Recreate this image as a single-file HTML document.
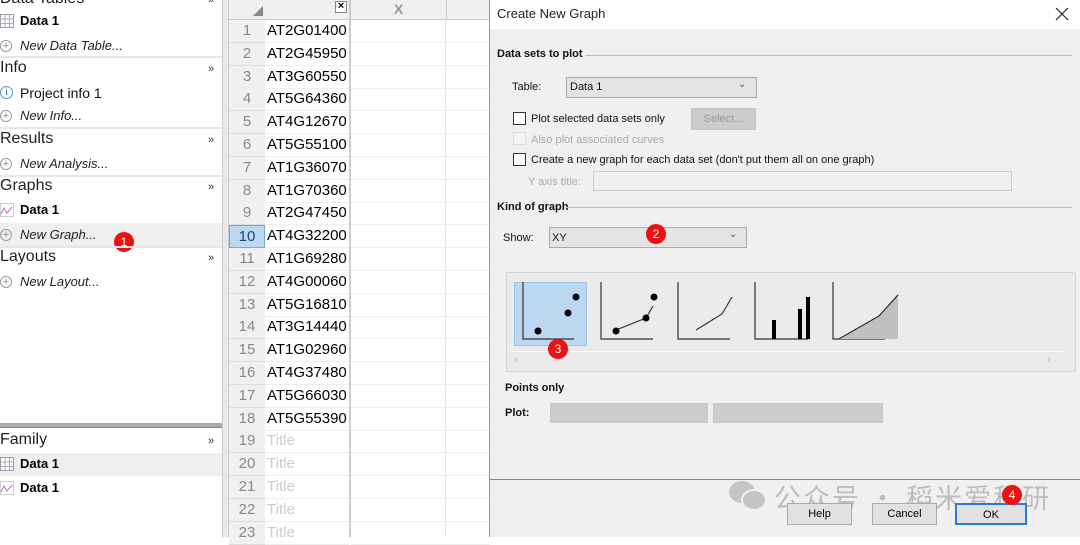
<!DOCTYPE html>
<html><head><meta charset="utf-8"><style>
*{margin:0;padding:0;box-sizing:border-box}
body{width:1080px;height:537px;overflow:hidden;background:#fff;font-family:"Liberation Sans","Noto Sans CJK SC",sans-serif;position:relative}
.a{position:absolute}
.sb{font-size:14px;color:#111}
.hd{font-size:16px;color:#222}
.it{font-style:italic;font-size:13px;color:#222}
.bd{font-weight:bold;font-size:13px}
.ln{height:2px;background:#e6e6e6;left:0;width:222px}
.chev{font-size:11px;color:#333;left:208px}
.plus{width:12px;height:12px;border:1px solid #999;border-radius:50%;font-size:11px;line-height:10px;text-align:center;color:#888;left:0}
.rn{left:229px;width:36px;text-align:center;font-size:15px;color:#888;height:23px;border-bottom:1px solid #ddd;background:#f0f0f0;line-height:22px}
.cell{left:265px;width:84px;font-size:15px;height:23px;line-height:22px;padding-left:2px;border-bottom:1px solid #eee}
.dlg{font-size:11px;color:#111}
.cb{width:13px;height:13px;border:1px solid #333;background:#fff}
.badge{width:20px;height:20px;border-radius:50%;background:#e11;color:#fff;font-size:12px;text-align:center;line-height:20px}
.btn{height:22px;border:1px solid #aaa;background:#e1e1e1;font-size:11px;text-align:center;line-height:20px}
</style></head><body>
<!-- sidebar -->
<div class="a hd" style="left:0;top:-10px">Data Tables</div>
<div class="a chev" style="top:-6px">»</div>
<svg class="a" style="left:0;top:14px" width="14" height="14"><rect x="0.5" y="0.5" width="13" height="13" fill="#fff" stroke="#99a"/><path d="M0 5h14M0 9.5h14M5 0v14M9.5 0v14" stroke="#aab"/></svg>
<div class="a bd" style="left:20px;top:13px">Data 1</div>
<div class="a plus" style="top:40px">+</div><div class="a it" style="left:20px;top:38px">New Data Table...</div>
<div class="a ln" style="top:56px"></div>
<div class="a hd" style="left:0;top:59px">Info</div><div class="a chev" style="top:63px">»</div>
<div class="a" style="left:0;top:86px;width:13px;height:13px;border:1px solid #59c;border-radius:50%;font-size:10px;color:#36a;text-align:center;line-height:11px">i</div>
<div class="a sb" style="left:20px;top:85px">Project info 1</div>
<div class="a plus" style="top:110px">+</div><div class="a it" style="left:20px;top:108px">New Info...</div>
<div class="a ln" style="top:127px"></div>
<div class="a hd" style="left:0;top:130px">Results</div><div class="a chev" style="top:134px">»</div>
<div class="a plus" style="top:158px">+</div><div class="a it" style="left:20px;top:156px">New Analysis...</div>
<div class="a ln" style="top:175px"></div>
<div class="a hd" style="left:0;top:177px">Graphs</div><div class="a chev" style="top:181px">»</div>
<svg class="a" style="left:0;top:203px" width="14" height="14"><rect x="0.5" y="0.5" width="13" height="13" fill="#fff" stroke="#ccc"/><path d="M1 11L4 5 7 10 12 4" stroke="#c6c" fill="none"/></svg>
<div class="a bd" style="left:20px;top:202px">Data 1</div>
<div class="a" style="left:0;top:223px;width:222px;height:23px;background:#efefef"></div>
<div class="a plus" style="top:229px">+</div><div class="a it" style="left:20px;top:227px">New Graph...</div>
<div class="a badge" style="left:114px;top:232px">1</div>
<div class="a ln" style="top:246px"></div>
<div class="a hd" style="left:0;top:248px">Layouts</div><div class="a chev" style="top:252px">»</div>
<div class="a plus" style="top:276px">+</div><div class="a it" style="left:20px;top:274px">New Layout...</div>
<div class="a" style="left:0;top:423px;width:222px;height:5px;background:#aaa;border-bottom:1px solid #888"></div>
<div class="a hd" style="left:0;top:431px">Family</div><div class="a chev" style="top:435px">»</div>
<div class="a" style="left:0;top:453px;width:222px;height:23px;background:#efefef"></div>
<svg class="a" style="left:0;top:457px" width="14" height="14"><rect x="0.5" y="0.5" width="13" height="13" fill="#fff" stroke="#99a"/><path d="M0 5h14M0 9.5h14M5 0v14M9.5 0v14" stroke="#aab"/></svg>
<div class="a bd" style="left:20px;top:456px">Data 1</div>
<svg class="a" style="left:0;top:481px" width="14" height="14"><rect x="0.5" y="0.5" width="13" height="13" fill="#fff" stroke="#ccc"/><path d="M1 11L4 5 7 10 12 4" stroke="#c6c" fill="none"/></svg>
<div class="a bd" style="left:20px;top:480px">Data 1</div>
<!-- divider -->
<div class="a" style="left:222px;top:0;width:7px;height:537px;background:#e8e8e8;border-left:1px solid #ccc;border-right:1px solid #ccc"></div>
<!-- grid -->
<div class="a" style="left:229px;top:0;width:36px;height:20px;background:#f0f0f0;border-bottom:1px solid #ccc"></div>
<div class="a" style="left:253px;top:6px;width:0;height:0;border-left:10px solid transparent;border-bottom:10px solid #888"></div>
<div class="a" style="left:265px;top:0;width:84px;height:20px;background:#f0f0f0;border-bottom:1px solid #ccc"></div>
<div class="a" style="left:335px;top:1px;width:12px;height:12px;border:1px solid #888;background:#fff;font-size:11px;font-weight:bold;line-height:9px;text-align:center">×</div>
<div class="a" style="left:349px;top:0;width:97px;height:20px;background:#f0f0f0;border-bottom:1px solid #ccc;border-left:2px solid #ccc;text-align:center;font-size:14px;color:#999;line-height:19px;font-weight:bold">X</div>
<div class="a" style="left:446px;top:0;width:44px;height:20px;background:#f0f0f0;border-bottom:1px solid #ccc;border-left:1px solid #ccc"></div>
<div class="a" style="left:349px;top:20px;width:2px;height:517px;background:#ccc"></div>
<div class="a" style="left:445px;top:20px;width:1px;height:517px;background:#e4e4e4"></div>
<div id="rows"></div>
<script>
var d=["AT2G01400","AT2G45950","AT3G60550","AT5G64360","AT4G12670","AT5G55100","AT1G36070","AT1G70360","AT2G47450","AT4G32200","AT1G69280","AT4G00060","AT5G16810","AT3G14440","AT1G02960","AT4G37480","AT5G66030","AT5G55390"];
var h="";for(var i=0;i<23;i++){var t=20+i*22.8;var sel=i==9;
h+='<div class="a rn" style="top:'+t+'px;'+(sel?'background:#bcd8f0;color:#247;border:1px solid #7ab;':'')+'">'+(i+1)+'</div>';
h+='<div class="a cell" style="top:'+t+'px;'+(i<18?'':'color:#ccc')+'">'+(i<18?d[i]:'Title')+'</div>';
h+='<div class="a" style="left:351px;width:139px;top:'+(t+22)+'px;height:1px;background:#eee"></div>';}
document.getElementById("rows").innerHTML=h;
</script>
<!-- dialog -->
<div class="a" style="left:489px;top:0;width:591px;height:537px;background:#f0f0f0;border-left:1px solid #999"></div>
<div class="a" style="left:490px;top:0;width:590px;height:29px;background:#fff"></div>
<div class="a" style="left:497px;top:6px;font-size:13px;color:#222">Create New Graph</div>
<svg class="a" style="left:1055px;top:7px" width="14" height="14"><path d="M1 1L13 13M13 1L1 13" stroke="#222" stroke-width="1.2"/></svg>
<div class="a dlg" style="left:497px;top:48px;font-weight:bold">Data sets to plot</div>
<div class="a" style="left:585px;top:55px;width:487px;height:1px;background:#bbb"></div>
<div class="a dlg" style="left:512px;top:81px">Table:</div>
<div class="a" style="left:566px;top:77px;width:191px;height:21px;border:1px solid #aaa;background:#e4e4e4"></div>
<div class="a dlg" style="left:570px;top:81px">Data 1</div>
<div class="a" style="left:738px;top:79px;font-size:10px;color:#555">&#8964;</div>
<div class="a cb" style="left:513px;top:112px"></div><div class="a dlg" style="left:531px;top:113px">Plot selected data sets only</div>
<div class="a" style="left:691px;top:108px;width:65px;height:22px;background:#ccc;border:1px solid #c4c4c4;font-size:11px;color:#999;text-align:center;line-height:20px">Select...</div>
<div class="a cb" style="left:513px;top:132px;border-color:#ddd;background:#f4f4f4"></div><div class="a dlg" style="left:531px;top:134px;color:#aaa">Also plot associated curves</div>
<div class="a cb" style="left:513px;top:153px"></div><div class="a dlg" style="left:531px;top:154px">Create a new graph for each data set (don't put them all on one graph)</div>
<div class="a dlg" style="left:528px;top:176px;color:#aaa">Y axis title:</div>
<div class="a" style="left:593px;top:171px;width:419px;height:20px;border:1px solid #ccc;background:#f0f0f0"></div>
<div class="a dlg" style="left:497px;top:201px;font-weight:bold">Kind of graph</div>
<div class="a" style="left:566px;top:207px;width:506px;height:1px;background:#bbb"></div>
<div class="a dlg" style="left:503px;top:232px">Show:</div>
<div class="a" style="left:549px;top:227px;width:198px;height:21px;border:1px solid #aaa;background:#e4e4e4"></div>
<div class="a dlg" style="left:552px;top:232px">XY</div>
<div class="a" style="left:729px;top:229px;font-size:10px;color:#555">&#8964;</div>
<div class="a badge" style="left:646px;top:224px">2</div>
<div class="a" style="left:506px;top:272px;width:570px;height:100px;border:1px solid #d4d4d4;background:#ebebeb;border-radius:2px"></div>
<div class="a" style="left:510px;top:351px;width:556px;height:1px;background:#fafafa"></div>
<div class="a" style="left:514px;top:282px;width:73px;height:64px;background:#bcd8f0;border:1px solid #9cc3e8"></div>
<svg class="a" style="left:510px;top:280px" width="450" height="64">
<g stroke="#333" stroke-width="1.2" fill="none">
<path d="M13 2V59H64"/><path d="M91 2V59H143"/><path d="M168 2V59H220"/><path d="M245 2V59H298"/><path d="M323 2V59H375"/>
<path d="M106 50L136 38 143 26"/><path d="M186 50L212 34 222 17"/><path d="M329 59L369 36 388 15"/></g>
<path d="M329 59L369 36 388 15V59Z" fill="#c0c0c0"/>
<path d="M329 59L369 36 388 15" stroke="#222" fill="none"/>
<g fill="#000"><circle cx="28" cy="51" r="3.5"/><circle cx="58" cy="33" r="3.5"/><circle cx="66" cy="17" r="3.5"/>
<circle cx="106" cy="51" r="3.5"/><circle cx="136" cy="38" r="3.5"/><circle cx="144" cy="17" r="3.5"/>
<rect x="262" y="40" width="4" height="19"/><rect x="288" y="29" width="4" height="30"/><rect x="296" y="17" width="4" height="42"/></g>
</svg>
<div class="a badge" style="left:548px;top:339px">3</div>
<div class="a" style="left:514px;top:352px;font-size:12px;color:#bbb">‹</div>
<div class="a" style="left:1047px;top:352px;font-size:12px;color:#bbb">›</div>
<div class="a dlg" style="left:505px;top:382px;font-weight:bold">Points only</div>
<div class="a dlg" style="left:505px;top:407px;font-weight:bold">Plot:</div>
<div class="a" style="left:550px;top:403px;width:158px;height:20px;background:#ccc;border:1px solid #c8c8c8"></div>
<div class="a" style="left:713px;top:403px;width:170px;height:20px;background:#ccc;border:1px solid #c8c8c8"></div>
<div class="a" style="left:490px;top:479px;width:590px;height:1px;background:#888"></div>
<svg class="a" style="left:727px;top:478px" width="42" height="36"><ellipse cx="15" cy="14" rx="13" ry="11" fill="#c4c4c4"/><ellipse cx="27" cy="22" rx="12" ry="10" fill="#c4c4c4" stroke="#f0f0f0" stroke-width="2"/></svg>
<div class="a" style="left:774px;top:477px;font-size:27px;color:#bdbdbd;font-family:'Noto Sans CJK SC',sans-serif;letter-spacing:2px">公众号 · 稻米爱科研</div>
<div class="a btn" style="left:787px;top:503px;width:65px">Help</div>
<div class="a btn" style="left:872px;top:503px;width:65px">Cancel</div>
<div class="a btn" style="left:955px;top:503px;width:72px;border:2px solid #2b7bd4">OK</div>
<div class="a badge" style="left:1002px;top:485px">4</div>
</body></html>
